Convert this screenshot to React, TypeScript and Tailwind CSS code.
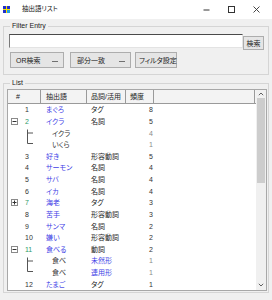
import React from "react";

type R = {
  n?: string;
  exp?: "minus" | "plus";
  child?: "first" | "last";
  word: string;
  pos: string;
  posBlue?: boolean;
  f: string;
};

const rows: R[] = [
  { n: "1", word: "まぐろ", pos: "タグ", f: "8" },
  { n: "2", exp: "minus", word: "イクラ", pos: "名詞", f: "5" },
  { child: "first", word: "イクラ", pos: "", f: "4" },
  { child: "last", word: "いくら", pos: "", f: "1" },
  { n: "3", word: "好き", pos: "形容動詞", f: "5" },
  { n: "4", word: "サーモン", pos: "名詞", f: "4" },
  { n: "5", word: "サバ", pos: "名詞", f: "4" },
  { n: "6", word: "イカ", pos: "名詞", f: "4" },
  { n: "7", exp: "plus", word: "海老", pos: "タグ", f: "3" },
  { n: "8", word: "苦手", pos: "形容動詞", f: "3" },
  { n: "9", word: "サンマ", pos: "名詞", f: "2" },
  { n: "10", word: "嫌い", pos: "形容動詞", f: "2" },
  { n: "11", exp: "minus", word: "食べる", pos: "動詞", f: "2" },
  { child: "first", word: "食べ", pos: "未然形", posBlue: true, f: "1" },
  { child: "last", word: "食べ", pos: "連用形", posBlue: true, f: "1" },
  { n: "12", word: "たまご", pos: "タグ", f: "1" },
];

function ExpIcon({ minus }: { minus: boolean }) {
  return (
    <svg width="7" height="7" viewBox="0 0 7 7" className="shrink-0">
      <rect x="0.5" y="0.5" width="6" height="6" fill="#fff" stroke="#8a8a8a" />
      <path d="M1.5 3.5H5.5" stroke="#333" strokeWidth="1" />
      {!minus && <path d="M3.5 1.5V5.5" stroke="#333" strokeWidth="1" />}
    </svg>
  );
}

function TreeLines({ last }: { last: boolean }) {
  return (
    <svg
      width="33"
      height="12"
      viewBox="0 0 33 12"
      className="pointer-events-none absolute left-0 top-0 overflow-visible"
    >
      {last ? (
        <path d="M19.5 0V4.5H25" fill="none" stroke="#555" strokeWidth="1" />
      ) : (
        <path d="M19.5 2.5V12M19.5 6H25" fill="none" stroke="#555" strokeWidth="1" />
      )}
    </svg>
  );
}

function Row({ r }: { r: R }) {
  return (
    <div className="flex h-[11.75px] items-center leading-none">
      <div className="relative flex h-full w-[33px] items-center pl-[3px]">
        {r.exp ? <ExpIcon minus={r.exp === "minus"} /> : <span className="w-[7px] shrink-0" />}
        {r.n && (
          <span className={r.exp ? "ml-[7px] text-[#2e9b6a]" : "ml-[7px] text-[#333]"}>{r.n}</span>
        )}
        {r.child && <TreeLines last={r.child === "last"} />}
      </div>
      <div
        className={
          r.child
            ? "w-[46px] whitespace-nowrap pl-[11px] text-[#333]"
            : "w-[46px] whitespace-nowrap pl-[5px] text-[#3f3fe6]"
        }
      >
        {r.word}
      </div>
      <div
        className={
          r.posBlue
            ? "w-[39px] whitespace-nowrap pl-[4px] text-[#3f3fe6]"
            : "w-[39px] whitespace-nowrap pl-[4px] text-[#222]"
        }
      >
        {r.pos}
      </div>
      <div
        className={
          r.child
            ? "w-[28px] pr-[1px] text-right text-[#8a8a8a]"
            : "w-[28px] pr-[1px] text-right text-[#333]"
        }
      >
        {r.f}
      </div>
    </div>
  );
}

function Btn({ label, line, w, pl }: { label: string; line?: boolean; w: string; pl: string }) {
  return (
    <div
      className={`flex h-[16px] items-center border border-[#adadad] bg-[#e5e5e5] ${w} ${pl}`}
    >
      <span className="whitespace-nowrap leading-none">{label}</span>
      {line && <span className="ml-auto mr-[5px] mt-[2px] h-[1px] w-[6px] bg-[#707070]" />}
    </div>
  );
}

export default function App() {
  return (
    <div className="h-[300px] w-[272px] overflow-hidden bg-[#f0f0f0] font-['Liberation_Sans','Noto_Sans_CJK_JP',sans-serif] text-[7px] text-[#222] [font-feature-settings:'palt']">
      {/* Title bar */}
      <div className="flex h-[19px] items-center bg-white">
        <svg width="7" height="7" viewBox="0 0 7 7" className="ml-[3px] shrink-0">
          <rect x="0" y="0" width="7" height="7" fill="#f5e000" />
          <rect x="0" y="0" width="3" height="3" fill="#1f2fd0" />
          <rect x="4" y="0" width="3" height="3" fill="#1f2fd0" />
          <rect x="0" y="4" width="3" height="3" fill="#1f2fd0" />
          <rect x="4" y="4" width="3" height="3" fill="#22a0e8" />
        </svg>
        <span className="ml-[12px] text-[6.5px] leading-none text-[#111]">抽出語リスト</span>
        <div className="ml-auto mr-[3px] flex h-full">
          <div className="flex w-[25px] items-center justify-center">
            <svg width="7" height="7" viewBox="0 0 7 7">
              <path d="M0.5 4H6.5" stroke="#333" strokeWidth="1" />
            </svg>
          </div>
          <div className="flex w-[25px] items-center justify-center">
            <svg width="7" height="7" viewBox="0 0 7 7">
              <rect x="0.5" y="0.5" width="6" height="6" fill="none" stroke="#333" strokeWidth="1" />
            </svg>
          </div>
          <div className="flex w-[25px] items-center justify-center">
            <svg width="7" height="7" viewBox="0 0 7 7">
              <path d="M0.5 0.5L6.5 6.5M6.5 0.5L0.5 6.5" stroke="#333" strokeWidth="0.9" />
            </svg>
          </div>
        </div>
      </div>

      {/* Filter Entry */}
      <div className="relative ml-[3px] mt-[7px] h-[49px] w-[266px] border border-[#d5d5d5] pb-[6px] pl-[5px] pr-[4px] pt-[7px]">
        <span className="absolute -top-[5px] left-[6px] bg-[#f0f0f0] px-[2px] leading-[8px] text-[#222]">
          Filter Entry
        </span>
        <div className="flex h-[16px] items-start">
          <div className="h-[14px] w-[234px] border border-b-[#e3e3e3] border-l-[#7a7a7a] border-r-[#e3e3e3] border-t-[#4a4a4a] bg-white" />
          <div className="mt-[2px] flex h-[14px] w-[21px] items-center justify-center border border-[#adadad] bg-[#e5e5e5] leading-none">
            検索
          </div>
        </div>
        <div className="mt-[2px] flex items-center pl-[1px]">
          <Btn label="OR検索" line w="w-[54px]" pl="pl-[5px]" />
          <div className="ml-[6px]">
            <Btn label="部分一致" line w="w-[61px]" pl="pl-[6px]" />
          </div>
          <div className="ml-[4px]">
            <Btn label="フィルタ設定" w="w-[42px]" pl="pl-[3px]" />
          </div>
        </div>
      </div>

      {/* List */}
      <div className="relative ml-[3px] mt-[8px] h-[210px] w-[266px] border border-[#d5d5d5] pb-[1px] pl-[3px] pr-[1px] pt-[5px]">
        <span className="absolute -top-[5px] left-[6px] bg-[#f0f0f0] px-[2px] leading-[8px] text-[#222]">
          List
        </span>
        <div className="flex h-[202px] w-[260px] overflow-hidden border border-[#a8a8a8] bg-white">
          <div className="flex w-[248px] flex-col">
            {/* header */}
            <div className="flex h-[14px] shrink-0 items-center border-b border-[#9a9a9a] bg-[#f3f3f3] leading-none text-[#222]">
              <div className="flex h-full w-[33px] items-center border-r border-[#9a9a9a] pl-[8px]">#</div>
              <div className="flex h-full w-[46px] items-center border-r border-[#9a9a9a] pl-[5px]">抽出語</div>
              <div className="flex h-full w-[39px] items-center border-r border-[#9a9a9a] pl-[4px]">品詞/活用</div>
              <div className="flex h-full w-[28px] items-center border-r border-[#9a9a9a] pl-[4px]">頻度</div>
              <div className="h-full w-[101px] border-r border-[#9a9a9a]" />
            </div>
            {rows.map((r, i) => (
              <Row key={i} r={r} />
            ))}
          </div>
          {/* scrollbar */}
          <div className="flex w-[10px] flex-col items-center bg-[#f0f0f0]">
            <div className="flex h-[8px] w-full items-center justify-center">
              <svg width="6" height="4" viewBox="0 0 6 4">
                <path d="M0.8 3.2L3 1L5.2 3.2" fill="none" stroke="#606060" strokeWidth="1" />
              </svg>
            </div>
            <div className="h-[85px] w-[8px] bg-[#cdcdcd]" />
            <div className="mb-[1px] mt-auto flex h-[8px] w-full items-center justify-center">
              <svg width="6" height="4" viewBox="0 0 6 4">
                <path d="M0.8 0.8L3 3L5.2 0.8" fill="none" stroke="#606060" strokeWidth="1" />
              </svg>
            </div>
          </div>
        </div>
      </div>
    </div>
  );
}
